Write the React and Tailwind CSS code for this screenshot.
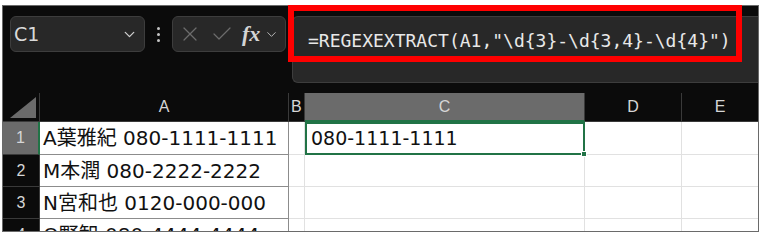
import React from "react";
import { ChevronDown, X, Check } from "lucide-react";

const cellFont = { fontFamily: '"DejaVu Sans", "Noto Sans CJK JP", sans-serif' };

function HeaderCell({ label, selected, last, align = "center" }) {
  return (
    <div
      className={`h-[29px] flex items-center ${align === "left" ? "justify-start pl-[2px]" : "justify-center"} text-[16px] text-[#d6d6d6] ${
        selected ? "bg-[#6b6b6b] border-b-2 border-b-[#217346]" : "bg-[#0b0b0b] border-b border-b-[#3a3a3a]"
      } ${last ? "" : "border-r border-r-[#3a3a3a]"}`}
      style={{ fontFamily: '"Liberation Sans", Arial, sans-serif' }}
    >
      {label}
    </div>
  );
}

function RowHeader({ n, selected, h }) {
  return (
    <div
      className={`flex items-center justify-center text-[16px] text-[#d6d6d6] border-b border-b-[#3a3a3a] ${
        selected ? "bg-[#6b6b6b] border-r-2 border-r-[#217346]" : "bg-[#0b0b0b] border-r border-r-[#3a3a3a]"
      } ${h}`}
      style={{ fontFamily: '"Liberation Sans", Arial, sans-serif' }}
    >
      {n}
    </div>
  );
}

const rows = [
  "A葉雅紀 080-1111-1111",
  "M本潤 080-2222-2222",
  "N宮和也 0120-000-000",
  "O野智 080-4444-4444",
];

export default function App() {
  const heights = ["h-[33px]", "h-[32px]", "h-[32px]", "h-[32px]"];
  return (
    <div className="w-[768px] h-[241px] bg-white relative overflow-hidden pt-[5px] pl-[2px]">
      <div className="w-[757px] h-[227px] bg-[#0b0b0b] border border-[#6a6a6a] overflow-hidden flex flex-col">
        {/* toolbar */}
        <div className="h-[87px] flex items-start pt-[10px] pl-[7px] shrink-0">
          <div className="w-[135px] h-[36px] rounded-[6px] bg-[#282828] border border-[#3d3d3d] flex items-center justify-between pl-[3px] pr-[6px]">
            <span className="text-[19px] text-[#d9d9d9]" style={cellFont}>C1</span>
            <ChevronDown size={17} strokeWidth={1.8} color="#cfcfcf" />
          </div>
          <div className="w-[27px] h-[36px] flex flex-col items-center justify-center gap-[3px]">
            <span className="w-[3px] h-[3px] rounded-full bg-[#c4c4c4]" />
            <span className="w-[3px] h-[3px] rounded-full bg-[#c4c4c4]" />
            <span className="w-[3px] h-[3px] rounded-full bg-[#c4c4c4]" />
          </div>
          <div className="w-[114px] h-[36px] rounded-[6px] bg-[#282828] border border-[#3d3d3d] flex items-center pl-[5px] gap-[8px]">
            <X size={24} strokeWidth={1.2} color="#6c6c6c" />
            <Check size={24} strokeWidth={1.2} color="#6c6c6c" />
            <div className="flex items-center gap-[4px]">
              <span
                className="text-[22px] italic font-bold text-[#d4d4d4] leading-none"
                style={{ fontFamily: '"Liberation Serif", "Times New Roman", serif' }}
              >
                fx
              </span>
              <ChevronDown size={15} strokeWidth={1.6} color="#b5b5b5" />
            </div>
          </div>
          <div className="ml-[6px] flex-1 h-[67px] bg-[#282828] border border-[#3d3d3d] border-r-0 rounded-l-[6px] pl-[15px] pt-[10px]">
            <span
              className="text-[18px] text-[#e8e8e8] whitespace-pre"
              style={{ fontFamily: '"DejaVu Sans Mono", "Liberation Mono", monospace' }}
            >
              {'=REGEXEXTRACT(A1,"\\d{3}-\\d{3,4}-\\d{4}")'}
            </span>
          </div>
        </div>

        {/* grid */}
        <div className="grid grid-cols-[37px_249px_16px_280px_97px_76px]">
          <div className="h-[29px] bg-[#0b0b0b] border-r border-r-[#3a3a3a] border-b border-b-[#3a3a3a]">
            <svg width="37" height="29" className="block">
              <polygon points="33,4 33,25 7,25" fill="#6b6b6b" />
            </svg>
          </div>
          <HeaderCell label="A" />
          <HeaderCell label="B" align="left" />
          <HeaderCell label="C" selected />
          <HeaderCell label="D" />
          <HeaderCell label="E" last />

          {rows.map((text, i) => (
            <React.Fragment key={i}>
              <RowHeader n={String(i + 1)} selected={i === 0} h={heights[i]} />
              <div
                className={`${heights[i]} bg-white border-r border-r-[#8c8c8c] border-b border-b-[#8c8c8c] flex items-center pl-[3px] text-[20px] text-[#111] whitespace-nowrap overflow-hidden`}
                style={cellFont}
              >
                {text}
              </div>
              <div className={`${heights[i]} bg-white border-r border-r-[#e1e1e1] border-b border-b-[#e1e1e1]`} />
              {i === 0 ? (
                <div className={`${heights[i]} bg-white border-2 border-[#217346] relative flex items-center pl-[4px] text-[19px] text-[#111]`} style={cellFont}>
                  080-1111-1111
                  <span className="absolute right-[-4px] bottom-[-4px] w-[6px] h-[6px] bg-[#217346] border border-white" />
                </div>
              ) : (
                <div className={`${heights[i]} bg-white border-r border-r-[#e1e1e1] border-b border-b-[#e1e1e1]`} />
              )}
              <div className={`${heights[i]} bg-white border-r border-r-[#e1e1e1] border-b border-b-[#e1e1e1]`} />
              <div className={`${heights[i]} bg-white border-b border-b-[#e1e1e1]`} />
            </React.Fragment>
          ))}
        </div>
      </div>

      {/* red annotation box */}
      <div className="absolute left-[288px] top-[5px] w-[454px] h-[57px] border-[6px] border-[#ff0000] pointer-events-none" />
    </div>
  );
}
